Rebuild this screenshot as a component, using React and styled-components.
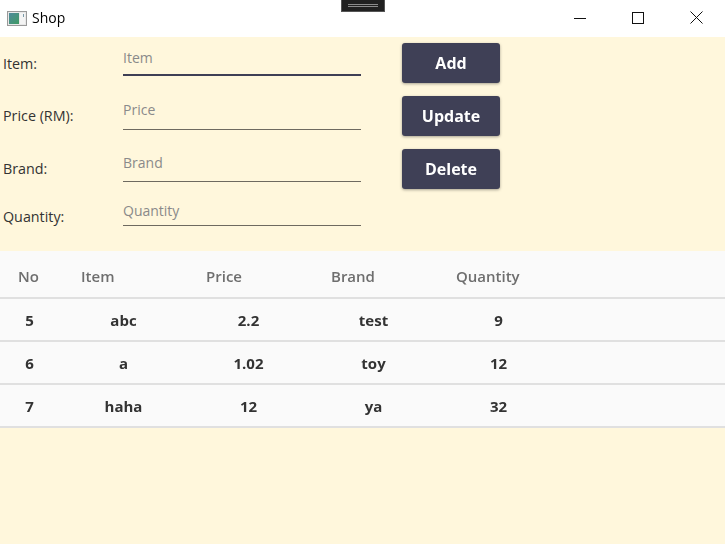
import React from "react";
import styled, { createGlobalStyle } from "styled-components";

const GlobalStyle = createGlobalStyle`
    html, body {
        margin: 0;
        padding: 0;
        background: #fff7dc;
    }
    * {
        box-sizing: border-box;
    }
`;

const items = [
    { no: 5, name: "abc", price: "2.2", brand: "test", qty: 9 },
    { no: 6, name: "a", price: "1.02", brand: "toy", qty: 12 },
    { no: 7, name: "haha", price: "12", brand: "ya", qty: 32 },
];

const fields = [
    { label: "Item:", placeholder: "Item", top: 11, pad: 6, focused: true },
    { label: "Price (RM):", placeholder: "Price", top: 24, pad: 9 },
    { label: "Brand:", placeholder: "Brand", top: 23, pad: 8 },
    { label: "Quantity:", placeholder: "Quantity", top: 19, pad: 4 },
];

const App = () => {
    return (
        <>
            <GlobalStyle />
            <Window>
                <TitleBar>
                    <AppIcon width="20" height="15" viewBox="0 0 20 15">
                        <defs>
                            <linearGradient id="ico" x1="0" y1="0" x2="1" y2="1">
                                <stop offset="0" stopColor="#4f8a9c" />
                                <stop offset="1" stopColor="#3f9a63" />
                            </linearGradient>
                        </defs>
                        <rect x="0.5" y="0.5" width="19" height="14" fill="#e8e8e8" stroke="#9a9a9a" />
                        <rect x="2" y="2" width="10" height="11" fill="url(#ico)" />
                        <rect x="13" y="2" width="5" height="11" fill="#f4f4f4" />
                        <rect x="16" y="3" width="1" height="3" fill="#7a9aa8" />
                    </AppIcon>
                    <Title>Shop</Title>
                    <SnapHandle>
                        <span />
                    </SnapHandle>
                    <Controls>
                        <ControlButton>
                            <svg width="12" height="12" viewBox="0 0 12 12">
                                <line x1="0" y1="6.5" x2="12" y2="6.5" stroke="#111" strokeWidth="1" />
                            </svg>
                        </ControlButton>
                        <ControlButton>
                            <svg width="12" height="12" viewBox="0 0 12 12">
                                <rect x="0.5" y="0.5" width="11" height="11" fill="none" stroke="#111" strokeWidth="1" />
                            </svg>
                        </ControlButton>
                        <ControlButton>
                            <svg width="13" height="13" viewBox="0 0 13 13">
                                <path d="M0.5 0.5 L12.5 12.5 M12.5 0.5 L0.5 12.5" stroke="#111" strokeWidth="1" />
                            </svg>
                        </ControlButton>
                    </Controls>
                </TitleBar>

                <FormArea>
                    <FieldList>
                        {fields.map((f) => (
                            <Field key={f.label} $top={f.top}>
                                <Label>{f.label}</Label>
                                <Input
                                    placeholder={f.placeholder}
                                    $pad={f.pad}
                                    $focused={f.focused}
                                    autoFocus={f.focused}
                                />
                            </Field>
                        ))}
                    </FieldList>
                    <ButtonColumn>
                        <ActionButton>Add</ActionButton>
                        <ActionButton>Update</ActionButton>
                        <ActionButton>Delete</ActionButton>
                    </ButtonColumn>
                </FormArea>

                <Table>
                    <HeaderRow>
                        <HeadCell>No</HeadCell>
                        <HeadCell>Item</HeadCell>
                        <HeadCell>Price</HeadCell>
                        <HeadCell>Brand</HeadCell>
                        <HeadCell>Quantity</HeadCell>
                        <span />
                    </HeaderRow>
                    {items.map((it) => (
                        <Row key={it.no}>
                            <Cell>{it.no}</Cell>
                            <Cell>{it.name}</Cell>
                            <Cell>{it.price}</Cell>
                            <Cell>{it.brand}</Cell>
                            <Cell>{it.qty}</Cell>
                            <span />
                        </Row>
                    ))}
                </Table>
            </Window>
        </>
    );
};

export default App;

const Window = styled.div`
    width: 725px;
    height: 544px;
    display: flex;
    flex-direction: column;
    background: #fff7dc;
    font-family: "Open Sans", "Noto Sans", sans-serif;
    overflow: hidden;
`;

const TitleBar = styled.div`
    position: relative;
    height: 37px;
    flex-shrink: 0;
    background: #ffffff;
    display: flex;
    align-items: center;
    padding-left: 7px;
`;

const AppIcon = styled.svg`
    display: block;
    margin-right: 5px;
`;

const Title = styled.span`
    font-size: 14px;
    color: #000;
    margin-top: -2px;
`;

const SnapHandle = styled.div`
    position: absolute;
    left: 341px;
    top: 0;
    width: 44px;
    height: 12px;
    background: #202020;
    border: 1px solid #555;
    border-top: none;
    display: flex;
    align-items: center;
    justify-content: center;

    span {
        display: block;
        width: 30px;
        height: 3px;
        border-top: 1px solid #8a8a8a;
        border-bottom: 1px solid #8a8a8a;
        margin-top: -1px;
    }
`;

const Controls = styled.div`
    margin-left: auto;
    display: flex;
    height: 100%;
    margin-top: -2px;
`;

const ControlButton = styled.div`
    width: 58px;
    height: 100%;
    display: flex;
    align-items: center;
    justify-content: center;
`;

const FormArea = styled.div`
    height: 214px;
    flex-shrink: 0;
    display: flex;
    align-items: flex-start;
`;

const FieldList = styled.div`
    display: flex;
    flex-direction: column;
    padding-left: 3px;
`;

const Field = styled.div`
    display: flex;
    align-items: flex-start;
    margin-top: ${(p) => p.$top}px;
`;

const Label = styled.label`
    width: 120px;
    font-size: 14.3px;
    line-height: 20px;
    margin-top: 6px;
    color: #333;
`;

const Input = styled.input`
    width: 238px;
    padding: 0 0 ${(p) => p.$pad}px 0;
    margin: 0;
    border: none;
    border-bottom: ${(p) => (p.$focused ? "2px solid #3f3f55" : "1px solid #6e6a60")};
    background: transparent;
    font-family: inherit;
    font-size: 14px;
    line-height: 20px;
    color: #333;
    outline: none;
    caret-color: #222;

    &::placeholder {
        color: #8a8a8a;
    }
`;

const ButtonColumn = styled.div`
    display: flex;
    flex-direction: column;
    gap: 13px;
    margin-left: 41px;
    padding-top: 6px;
`;

const ActionButton = styled.button`
    width: 98px;
    height: 40px;
    border: none;
    border-radius: 3px;
    background: #3f4056;
    color: #ffffff;
    font-family: inherit;
    font-size: 16px;
    font-weight: 700;
    box-shadow: 0 1px 3px rgba(0, 0, 0, 0.35);
    cursor: pointer;
`;

const Table = styled.div`
    background: #fafafa;
    flex-shrink: 0;
`;

const columns = "63px 125px 125px 125px 125px 1fr";

const HeaderRow = styled.div`
    display: grid;
    grid-template-columns: ${columns};
    height: 48px;
    padding-top: 3px;
    align-items: center;
    border-bottom: 2px solid #e0e0e0;
`;

const HeadCell = styled.div`
    padding-left: 18px;
    font-size: 15px;
    font-weight: 600;
    color: #6e6e6e;
`;

const Row = styled.div`
    display: grid;
    grid-template-columns: ${columns};
    height: 43px;
    align-items: center;
    border-bottom: 2px solid #e0e0e0;
`;

const Cell = styled.div`
    text-align: center;
    padding-right: 4px;
    font-size: 15px;
    font-weight: 700;
    color: #333;
`;
